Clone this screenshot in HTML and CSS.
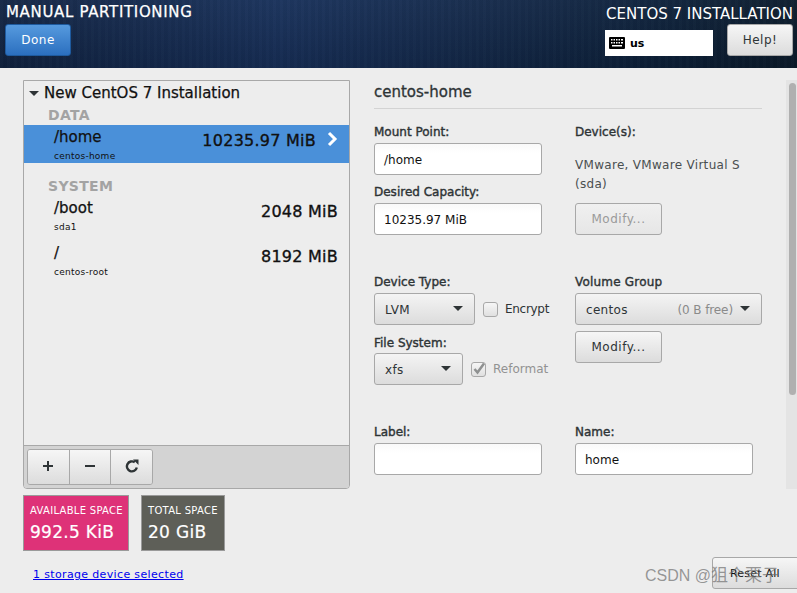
FILE: index.html
```html
<!DOCTYPE html>
<html lang="en">
<head>
<meta charset="utf-8">
<title>Manual Partitioning</title>
<link rel="stylesheet" href="styles.css">
</head>
<body>
<header class="topbar">
  <div class="top-left">
    <div class="title">MANUAL PARTITIONING</div>
    <button class="btn btn-done">Done</button>
  </div>
  <div class="top-right">
    <div class="product">CENTOS 7 INSTALLATION</div>
    <div class="top-controls">
      <div class="kbd">
        <svg class="kbd-icon" width="16" height="12" viewBox="0 0 16 12"><path fill="#000" fill-rule="evenodd" d="M1 0h14a1 1 0 0 1 1 1v10a1 1 0 0 1-1 1H1a1 1 0 0 1-1-1V1a1 1 0 0 1 1-1zM2 2v1.500h1.500V2zM4.500 2v1.500H6V2zM7 2v1.500h1.500V2zM9.500 2v1.500H11V2zM12 2v1.500h2V2zM2 5v1.500h1.500V5zM4.500 5v1.500H6V5zM7 5v1.500h1.500V5zM9.500 5v1.500H11V5zM12 5v1.500h2V5zM3 8v1.500h10V8z"/></svg>
        <span>us</span>
      </div>
      <button class="btn btn-help">Help!</button>
    </div>
  </div>
</header>
<main class="content">
  <section class="left">
    <div class="panel">
      <div class="tree">
        <div class="install"><span class="arrow"></span>New CentOS 7 Installation</div>
        <div class="group group-data">DATA</div>
        <div class="row selected">
          <div class="row-text"><div class="mount">/home</div><div class="dev">centos-home</div></div>
          <div class="size">10235.97 MiB</div>
          <svg class="chev" width="11" height="16" viewBox="0 0 11 16"><path d="M2 2l6 6-6 6" fill="none" stroke="#fff" stroke-width="3"/></svg>
        </div>
        <div class="group group-system">SYSTEM</div>
        <div class="row">
          <div class="row-text"><div class="mount">/boot</div><div class="dev">sda1</div></div>
          <div class="size">2048 MiB</div>
        </div>
        <div class="row">
          <div class="row-text"><div class="mount">/</div><div class="dev">centos-root</div></div>
          <div class="size">8192 MiB</div>
        </div>
      </div>
      <div class="toolbar">
        <div class="tool-group">
          <button class="tool"><svg width="12" height="12" viewBox="0 0 12 12"><path d="M6 1v10M1 6h10" stroke="#2e3436" stroke-width="2"/></svg></button>
          <button class="tool"><svg width="12" height="12" viewBox="0 0 12 12"><path d="M1 6h10" stroke="#2e3436" stroke-width="2"/></svg></button>
          <button class="tool"><svg width="14" height="14" viewBox="0 0 14 14"><path d="M11.800 8.500A5 5 0 1 1 9.800 3.300" fill="none" stroke="#2e3436" stroke-width="2.400"/><path d="M8 0.500h5.500V6z" fill="#2e3436"/></svg></button>
        </div>
      </div>
    </div>
    <div class="spaces">
      <div class="space space-avail"><div class="space-label">AVAILABLE SPACE</div><div class="space-value">992.5 KiB</div></div>
      <div class="space space-total"><div class="space-label">TOTAL SPACE</div><div class="space-value">20 GiB</div></div>
    </div>
    <a class="devices" href="#">1 storage device selected</a>
  </section>
  <section class="right">
    <h2 class="heading">centos-home</h2>
    <div class="form">
      <div class="col col-a">
        <label class="lbl">Mount Point:</label>
        <div class="input input-a">/home</div>
        <label class="lbl lbl-cap">Desired Capacity:</label>
        <div class="input input-a">10235.97 MiB</div>
        <label class="lbl lbl-type">Device Type:</label>
        <div class="inline">
          <div class="select sel-lvm"><span>LVM</span><span class="caret"></span></div>
          <span class="check"></span><span class="check-text check-encrypt">Encrypt</span>
        </div>
        <label class="lbl lbl-fs">File System:</label>
        <div class="inline">
          <div class="select sel-xfs"><span>xfs</span><span class="caret"></span></div>
          <span class="check check-on"><svg width="14" height="14" viewBox="0 0 14 14"><path d="M2.500 7l3 3.500L12 1.500" fill="none" stroke="#8f9191" stroke-width="2.500"/></svg></span><span class="check-text muted">Reformat</span>
        </div>
        <label class="lbl lbl-label">Label:</label>
        <div class="input input-a"></div>
      </div>
      <div class="col col-b">
        <label class="lbl">Device(s):</label>
        <div class="devtext">VMware, VMware Virtual S<br>(sda)</div>
        <button class="btn btn-modify is-off">Modify...</button>
        <label class="lbl lbl-vg">Volume Group</label>
        <div class="select sel-vg"><span>centos</span><span class="free">(0 B free)</span><span class="caret"></span></div>
        <button class="btn btn-modify btn-mod2">Modify...</button>
        <label class="lbl lbl-name">Name:</label>
        <div class="input input-b">home</div>
      </div>
    </div>
  </section>
  <div class="scrollbar"><div class="thumb"></div></div>
</main>
<button class="btn btn-reset">Reset All</button>
<div class="watermark">CSDN @<span class="wm-cjk">狙个栗子</span></div>
</body>
</html>
```
FILE: styles.css
```css
* { box-sizing: border-box; }
html, body { margin: 0; padding: 0; }
body {
  width: 797px; height: 593px; overflow: hidden; position: relative;
  background: #ededed; color: #2e3436;
  font-family: "DejaVu Sans", sans-serif; font-size: 12px;
}
.topbar {
  height: 68px; display: flex; justify-content: space-between;
  background:
    repeating-linear-gradient(90deg, rgba(255,255,255,0.012) 0 3px, rgba(0,0,0,0.02) 3px 7px),
    linear-gradient(180deg, rgba(255,255,255,0.03), rgba(0,0,0,0.12)),
    linear-gradient(90deg, #112443 0%, #17305a 35%, #13294a 60%, #0c2039 85%, #0b1b2c 100%);
  color: #fff;
}
.top-left { padding: 3px 0 0 5px; }
.title { font-size: 15px; line-height: 18px; letter-spacing: 0.66px; margin-left: 1px; -webkit-text-stroke: 0.25px #fff; }
.top-right { display: flex; flex-direction: column; align-items: flex-end; padding: 5px 4px 0 0; }
.product { font-size: 15px; line-height: 18px; margin-bottom: 1px; color: #fff; }
.top-controls { display: flex; gap: 14px; align-items: flex-end; }
.btn {
  font-family: inherit; font-size: 12px; border: 1px solid #a8a8a8; border-radius: 3px;
  background: linear-gradient(#f6f6f6, #dcdcdc); color: #2e3436; padding: 0; letter-spacing: 0.5px;
}
.btn-done {
  display: block; width: 66px; height: 32px; margin-top: 3px; color: #fff;
  background: linear-gradient(#569ade, #2b6fbf); border-color: #1e5a9e;
}
.btn-help { width: 66px; height: 32px; }
.kbd {
  width: 108px; height: 26px; background: #fff; color: #000; display: flex; align-items: center;
  gap: 5px; padding-left: 4px; font-weight: 700; font-size: 11px;
}
.kbd-icon { flex: none; }
.content { display: flex; height: 525px; }
.left { width: 327px; margin: 12px 0 0 23px; flex: none; }
.panel {
  height: 409px; border: 1px solid #a8a8a8; border-radius: 0 0 4px 4px;
  display: flex; flex-direction: column; overflow: hidden;
}
.tree { flex: 1; }
.install { height: 23px; font-size: 15px; line-height: 23px; color: #111; padding: 1px 0 0 5px; display: flex; align-items: center; -webkit-text-stroke: 0.25px #111; }
.arrow { width: 0; height: 0; border: 5px solid transparent; border-top: 5px solid #2e3436; border-bottom: 0; margin-right: 5px; }
.group { font-size: 14px; line-height: 18px; color: #a3a3a3; padding-left: 24px; font-weight: 700; letter-spacing: 0.3px; }
.group-data { margin-top: 2px; height: 19px; }
.group-system { margin-top: 14px; height: 19px; }
.row { height: 38px; display: flex; align-items: flex-start; padding-left: 30px; color: #111; margin-bottom: 7px; }
.row.selected { background: #4a90d9; margin-bottom: 0; }
.row-text { flex: 1; }
.mount { font-size: 15px; line-height: 20px; margin-top: 2px; -webkit-text-stroke: 0.25px #111; }
.dev { font-size: 9px; line-height: 12px; margin-top: 3px; letter-spacing: 0.25px; }
.size { font-size: 16px; line-height: 20px; margin-top: 6px; margin-right: 11px; letter-spacing: 0.25px; -webkit-text-stroke: 0.35px #111; white-space: nowrap; }
.chev { margin: 6px 11px 0 0; flex: none; }
.toolbar { height: 43px; background: #d3d3d3; border-top: 1px solid #a8a8a8; padding: 3px 0 0 3px; }
.tool-group { display: flex; width: 126px; height: 36px; border: 1px solid #a8a8a8; border-radius: 3px; overflow: hidden; }
.tool {
  flex: 1; border: 0; border-left: 1px solid #a8a8a8; padding: 0 0 2px; display: flex; align-items: center; justify-content: center;
  background: linear-gradient(#f6f6f6, #dcdcdc);
}
.tool:first-child { border-left: 0; }
.spaces { display: flex; gap: 12px; margin-top: 6px; }
.space { height: 56px; border: 1px solid #9a9a9a; color: #fff; padding: 8px 0 0 6px; }
.space-avail { width: 106px; background: #de3278; }
.space-total { width: 84px; background: #5e5f58; }
.space-label { font-size: 10px; line-height: 14px; letter-spacing: 0.3px; }
.space-value { font-size: 17px; line-height: 20px; margin-top: 4px; letter-spacing: 0.3px; -webkit-text-stroke: 0.2px #fff; }
.devices { display: inline-block; margin: 17px 0 0 10px; font-size: 11px; line-height: 14px; color: #0000ee; letter-spacing: 0.35px; }
.right { width: 388px; margin: 12px 0 0 24px; flex: none; }
.heading { margin: 0; height: 29px; font-size: 15px; line-height: 24px; font-weight: 400; color: #2e3436; border-bottom: 1px solid #d3d3d3; -webkit-text-stroke: 0.3px #2e3436; }
.form { display: flex; gap: 33px; margin-top: 15px; }
.col { width: 168px; }
.col-b { width: 187px; }
.lbl { display: block; font-size: 12px; line-height: 16px; font-weight: 400; color: #2e3436; margin-bottom: 3px; -webkit-text-stroke: 0.4px #2e3436; }
.lbl-cap { margin-top: 9px; }
.lbl-type { margin-top: 39px; }
.lbl-fs { margin-top: 10px; margin-bottom: 2px; }
.lbl-label { margin-top: 39px; }
.lbl-vg { margin-top: 39px; letter-spacing: 0.2px; }
.lbl-name { margin-top: 61px; }
.input {
  height: 32px; border: 1px solid #a8a8a8; border-radius: 3px; background: linear-gradient(#f9f9f9, #fff 30%);
  font-size: 12px; line-height: 30px; padding: 1px 0 0 9px; color: #111;
}
.input-a { width: 168px; }
.input-b { width: 178px; }
.inline { display: flex; align-items: center; }
.select {
  flex: none; height: 32px; border: 1px solid #a8a8a8; border-radius: 3px; background: linear-gradient(#f4f4f4, #dcdcdc);
  display: flex; align-items: center; padding: 1px 10px 0; color: #2e3436; font-size: 12px; letter-spacing: 0.3px;
}
.sel-lvm { width: 101px; justify-content: space-between; }
.sel-xfs { width: 89px; justify-content: space-between; }
.sel-vg { width: 187px; }
.sel-vg .free { margin-left: auto; margin-right: 7px; color: #8a8a8a; font-size: 12px; letter-spacing: -0.1px; }
.caret { width: 0; height: 0; border: 5px solid transparent; border-top: 5px solid #2e3436; border-bottom: 0; margin-right: 1px; margin-top: -3px; }
.check { flex: none; width: 15px; height: 15px; border: 1px solid #a8a8a8; border-radius: 3px; background: linear-gradient(#f6f6f6, #e0e0e0); margin-left: 8px; display: block; line-height: 0; }
.check svg { margin-top: -1px; }
.check-text { flex: none; margin-left: 7px; font-size: 12px; }
.check-encrypt { letter-spacing: -0.3px; }
.muted { color: #929292; letter-spacing: 0; }
.devtext { font-size: 12px; line-height: 19px; color: #4a4f50; margin-top: 16px; letter-spacing: 0.3px; }
.btn-modify { display: block; width: 87px; height: 32px; }
.is-off { margin-top: 9px; color: #9a9a9a; background: linear-gradient(#f0f0f0, #e6e6e6); }
.btn-mod2 { margin-top: 6px; }
.scrollbar { width: 11px; height: 409px; margin: 12px 0 0 auto; background: #e4e4e4; flex: none; position: relative; }
.thumb { position: absolute; top: 3px; left: 3px; right: 1px; height: 312px; background: #b0b0b0; border-radius: 4px; }
.btn-reset { position: absolute; left: 712px; top: 557px; width: 90px; height: 32px; color: #111; font-size: 11px; text-align: left; padding-left: 17px; letter-spacing: 0.2px; }
.watermark { position: absolute; left: 645px; top: 566px; font-family: "Liberation Sans", "Noto Sans CJK SC", sans-serif; font-size: 16px; color: rgba(110,110,110,0.7); line-height: 20px; white-space: nowrap; }
.wm-cjk { font-size: 17px; }
```
